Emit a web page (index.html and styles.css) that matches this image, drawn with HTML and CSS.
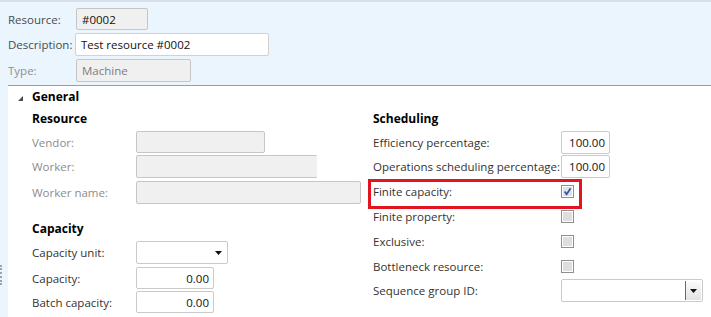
FILE: index.html
```html
<!DOCTYPE html>
<html>
<head>
<meta charset="utf-8">
<title>Resource</title>
<link rel="stylesheet" href="styles.css">
</head>
<body>
<header class="top">
  <div class="hrow h22"><span class="hlabel">Resource:</span><span class="field ro w72">#0002</span></div>
  <div class="hrow"><span class="hlabel">Description:</span><span class="field w193 desc">Test resource #0002</span></div>
  <div class="hrow"><span class="hlabel dis">Type:</span><span class="field ro w115 disv">Machine</span></div>
</header>
<div class="main">
  <div class="gutter"><span class="grip"></span></div>
  <section class="panel">
    <div class="fasttab">
      <svg class="tri" width="5" height="5" viewBox="0 0 5 5"><polygon points="0,5 5,0 5,5" fill="#4a4a4a"/></svg>
      <span>General</span>
    </div>
    <div class="cols">
      <div class="col left">
        <div class="group">Resource</div>
        <div class="row h22 mb2"><span class="lbl dis">Vendor:</span><span class="field ro w129"></span></div>
        <div class="row mb3"><span class="lbl dis">Worker:</span><span class="field ro w180 noright"></span></div>
        <div class="row"><span class="lbl dis">Worker name:</span><span class="field ro w224"></span></div>
        <div class="group cap">Capacity</div>
        <div class="row mt1 mb3"><span class="lbl">Capacity unit:</span><span class="field w92 combo"><svg class="arrow" width="7" height="4" viewBox="0 0 7 4"><polygon points="0,0 7,0 3.5,4" fill="#111"/></svg></span></div>
        <div class="row h22 mb2"><span class="lbl">Capacity:</span><span class="field w78 num">0.00</span></div>
        <div class="row h22"><span class="lbl">Batch capacity:</span><span class="field w78 num">0.00</span></div>
      </div>
      <div class="col right">
        <div class="group">Scheduling</div>
        <div class="row mb1"><span class="lbl r">Efficiency percentage:</span><span class="field w49 num">100.00</span></div>
        <div class="row mb1"><span class="lbl r">Operations scheduling percentage:</span><span class="field w49 num">100.00</span></div>
        <div class="row h24 mb1 marked"><span class="lbl r">Finite capacity:</span>
          <svg class="cb" width="13" height="13" viewBox="0 0 13 13"><rect x="0.5" y="0.5" width="12" height="12" fill="#f4f4f4" stroke="#8e8f8f"/><rect x="1.5" y="1.5" width="10" height="10" fill="#dfe3e8" stroke="#fff"/><path d="M3.6 6.6 L5.6 9.2 L9.6 3.2" fill="none" stroke="#2c54a6" stroke-width="1.7"/></svg>
        </div>
        <div class="row h24 mb1"><span class="lbl r">Finite property:</span>
          <svg class="cb" width="13" height="13" viewBox="0 0 13 13"><rect x="0.5" y="0.5" width="12" height="12" fill="#f4f4f4" stroke="#8e8f8f"/><rect x="1.5" y="1.5" width="10" height="10" fill="#dedede" stroke="#fff"/></svg>
        </div>
        <div class="row h24 mb1"><span class="lbl r">Exclusive:</span>
          <svg class="cb" width="13" height="13" viewBox="0 0 13 13"><rect x="0.5" y="0.5" width="12" height="12" fill="#f4f4f4" stroke="#8e8f8f"/><rect x="1.5" y="1.5" width="10" height="10" fill="#dedede" stroke="#fff"/></svg>
        </div>
        <div class="row h24 mb1"><span class="lbl r">Bottleneck resource:</span>
          <svg class="cb" width="13" height="13" viewBox="0 0 13 13"><rect x="0.5" y="0.5" width="12" height="12" fill="#f4f4f4" stroke="#8e8f8f"/><rect x="1.5" y="1.5" width="10" height="10" fill="#dedede" stroke="#fff"/></svg>
        </div>
        <div class="row"><span class="lbl r">Sequence group ID:</span><span class="field w142 lookup"><span class="lk-text"></span><span class="lk-btn"><svg width="7" height="4" viewBox="0 0 7 4"><polygon points="0,0 7,0 3.5,4" fill="#111"/></svg></span></span></div>
      </div>
    </div>
  </section>
</div>
</body>
</html>
```
FILE: styles.css
```css
* { box-sizing: border-box; }
html, body { margin: 0; padding: 0; }
body {
  width: 711px;
  height: 317px;
  overflow: hidden;
  background: #eaf5fe;
  font-family: "Open Sans", "Noto Sans", sans-serif;
  font-size: 11.5px;
  color: #333;
}
.top {
  border-top: 2px solid #d6dfe9;
  padding: 6px 0 3px 8px;
  height: 85px;
  display: flex;
  flex-direction: column;
  gap: 3px;
}
.hrow { display: flex; align-items: center; height: 23px; }
.hrow.h22 { height: 22px; }
.hlabel { width: 68px; color: #4a4a4a; }
.hlabel.dis { color: #8f8f8f; }
.field {
  height: 100%;
  border: 1px solid #cacaca;
  border-radius: 2px;
  background: #fff;
  padding: 0 5px;
  display: flex;
  align-items: center;
  color: #111;
  white-space: nowrap;
}
.ro { background: #f0f0f0; border-color: #c6c6c6; }
.desc { margin-left: -1px; border-color: #d2d2d2; }
.disv { color: #7d7d7d; }
.w72 { width: 72px; }
.w193 { width: 194px; }
.w115 { width: 115px; }
.w129 { width: 129px; }
.w180 { width: 181px; }
.w224 { width: 225px; }
.w92 { width: 92px; }
.w78 { width: 78px; }
.w49 { width: 49px; }
.w142 { width: 142px; }
.noright { border-right-color: transparent; border-radius: 2px 0 0 2px; }

.main { display: flex; height: 232px; }
.gutter { width: 8px; padding-top: 180px; }
.grip {
  display: block;
  width: 0;
  height: 20px;
  border-left: 2px dotted #a3a3a3;
}
.panel {
  flex: 1;
  background: #fff;
  border-top: 1px solid #9d9d9d;
}
.fasttab {
  height: 20px;
  display: flex;
  align-items: center;
  padding-left: 10px;
  font-weight: bold;
  color: #000;
  font-size: 12px;
}
.tri { margin-right: 9px; margin-top: 4px; }
.cols { display: flex; }
.col { display: flex; flex-direction: column; }
.left { width: 365px; padding-left: 24px; }
.right { flex: 1; }
.group {
  height: 24px;
  display: flex;
  align-items: center;
  font-weight: bold;
  color: #000;
  font-size: 12px;
}
.group.cap { height: 24px; margin-top: 12px; }
.right .group, .left .group:first-child { margin-bottom: 1px; }
.row {
  display: flex;
  align-items: center;
  height: 23px;
  position: relative;
}
.row.h22 { height: 22px; }
.row.h24 { height: 24px; }
.mb1 { margin-bottom: 1px; }
.mb2 { margin-bottom: 2px; }
.mb3 { margin-bottom: 3px; }
.mt1 { margin-top: 1px; }
.lbl { width: 104px; color: #333; white-space: nowrap; }
.lbl.dis { color: #8c8c8c; }
.lbl.r { width: 188px; }
.num { justify-content: flex-end; padding-right: 4px; }
.combo { justify-content: flex-end; padding-right: 5px; }
.arrow { display: block; }
.cb { display: block; }
.marked::after {
  content: "";
  position: absolute;
  left: -5px;
  top: 0;
  width: 208px;
  height: 24px;
  border: 3px solid #e2141f;
}
.lookup { padding: 1px; }
.lk-text { flex: 1; height: 100%; border-right: 1px solid #6a6a6a; }
.lk-btn {
  width: 15px;
  height: 100%;
  display: flex;
  align-items: center;
  justify-content: center;
  background: linear-gradient(#fbfbfb, #e3e3e3);
}
```
